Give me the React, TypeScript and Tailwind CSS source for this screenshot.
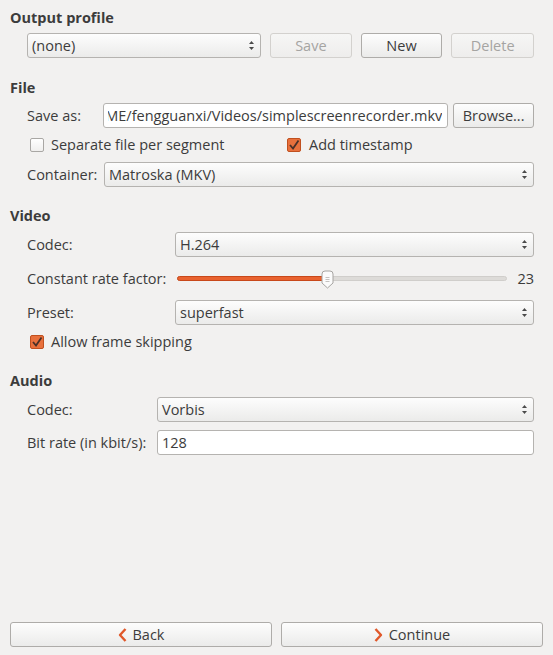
import React, { useEffect, useRef } from "react";

const font = { fontFamily: '"Open Sans", "Noto Sans", sans-serif' };

function Arrows() {
  return (
    <svg width="7" height="11" viewBox="0 0 7 11" className="shrink-0">
      <path d="M3.5 1 L6 4 L1 4 Z" fill="#4a4a4a" />
      <path d="M3.5 10 L6 7 L1 7 Z" fill="#4a4a4a" />
    </svg>
  );
}

function Combo({ text, className = "" }: { text: string; className?: string }) {
  return (
    <div
      className={
        "h-[25px] flex items-center justify-between rounded-[3px] border border-[#b5b3b0] bg-gradient-to-b from-[#fdfdfd] to-[#ebebea] pl-[4px] pr-[5px] text-[14.5px] text-[#3c3c3c] whitespace-nowrap " +
        className
      }
    >
      <span>{text}</span>
      <Arrows />
    </div>
  );
}

function Btn({
  children,
  disabled = false,
  className = "",
}: {
  children: React.ReactNode;
  disabled?: boolean;
  className?: string;
}) {
  return (
    <div
      className={
        "h-[25px] flex items-center justify-center rounded-[3px] border bg-gradient-to-b text-[14.5px] whitespace-nowrap " +
        (disabled
          ? "border-[#d3d1ce] from-[#f6f6f5] to-[#eeedec] text-[#a5a4a2] "
          : "border-[#aeaca9] from-[#fdfdfd] to-[#ebebea] text-[#3c3c3c] ") +
        className
      }
    >
      {children}
    </div>
  );
}

function Input({ text, className = "" }: { text: string; className?: string }) {
  return (
    <div
      className={
        "h-[25px] flex items-center rounded-[3px] border border-[#b5b3b0] bg-white px-[4px] text-[14.5px] text-[#3c3c3c] overflow-hidden whitespace-nowrap " +
        className
      }
    >
      {text}
    </div>
  );
}

function PathInput() {
  const ref = useRef<HTMLInputElement>(null);
  useEffect(() => {
    const el = ref.current;
    if (el) el.scrollLeft = el.scrollWidth;
  }, []);
  return (
    <input
      ref={ref}
      readOnly
      value="$HOME/fengguanxi/Videos/simplescreenrecorder.mkv"
      className="w-[346px] h-[25px] rounded-[3px] border border-[#b5b3b0] bg-white pl-[4px] pr-[5px] text-[14.5px] text-[#3c3c3c] outline-none"
      style={font}
    />
  );
}

function Check({ checked }: { checked: boolean }) {
  if (!checked)
    return (
      <div className="w-[14px] h-[14px] rounded-[2px] border border-[#a9a7a4] bg-gradient-to-b from-white to-[#f0efee] shrink-0" />
    );
  return (
    <div className="w-[14px] h-[14px] rounded-[2px] border border-[#c0501f] bg-[#e8703c] shrink-0 flex items-center justify-center">
      <svg width="12" height="12" viewBox="0 0 12 12">
        <path d="M2 6 L5 9.5 L10.5 1.5" stroke="#4a3028" strokeWidth="1.8" fill="none" />
      </svg>
    </div>
  );
}

function Heading({ children, className = "" }: { children: React.ReactNode; className?: string }) {
  return (
    <div className={"pl-[10px] h-[18px] flex items-center text-[14.5px] font-bold text-[#3c3c3c] " + className}>
      {children}
    </div>
  );
}

function Label({ children, className = "" }: { children: React.ReactNode; className?: string }) {
  return <div className={"text-[14.5px] text-[#3c3c3c] shrink-0 whitespace-nowrap " + className}>{children}</div>;
}

function Chevron({ dir }: { dir: "left" | "right" }) {
  return (
    <svg width="9" height="14" viewBox="0 0 9 14">
      {dir === "left" ? (
        <path d="M7.5 1 L2 7 L7.5 13" stroke="#e0582a" strokeWidth="2.4" fill="none" strokeLinejoin="round" />
      ) : (
        <path d="M1.5 1 L7 7 L1.5 13" stroke="#e0582a" strokeWidth="2.4" fill="none" strokeLinejoin="round" />
      )}
    </svg>
  );
}

export default function App() {
  return (
    <div
      style={font}
      className="w-[553px] h-[655px] bg-[#f2f1f0] flex flex-col text-[#3c3c3c] overflow-hidden"
    >
      <Heading className="mt-[9px]">Output profile</Heading>
      <div className="mt-[6px] flex items-center pl-[27px] pr-[19px] h-[25px]">
        <Combo text="(none)" className="w-[235px]" />
        <Btn disabled className="w-[82px] ml-[9px]">Save</Btn>
        <Btn className="w-[82px] ml-[9px]">New</Btn>
        <Btn disabled className="w-[83px] ml-[9px]">Delete</Btn>
      </div>

      <Heading className="mt-[21px]">File</Heading>
      <div className="mt-[6px] flex items-center pl-[27px] pr-[19px] h-[25px]">
        <Label className="w-[76px]">Save as:</Label>
        <PathInput />
        <Btn className="w-[81px] ml-[5px]">Browse...</Btn>
      </div>
      <div className="mt-[5px] flex items-center h-[24px] pl-[30px]">
        <Check checked={false} />
        <Label className="ml-[7px] w-[236px]">Separate file per segment</Label>
        <Check checked={true} />
        <Label className="ml-[8px]">Add timestamp</Label>
      </div>
      <div className="mt-[5px] flex items-center pl-[27px] pr-[19px] h-[25px]">
        <Label className="w-[77px]">Container:</Label>
        <Combo text="Matroska (MKV)" className="flex-1" />
      </div>

      <Heading className="mt-[20px]">Video</Heading>
      <div className="mt-[7px] flex items-center pl-[27px] pr-[19px] h-[25px]">
        <Label className="w-[148px]">Codec:</Label>
        <Combo text="H.264" className="flex-1" />
      </div>
      <div className="mt-[8px] flex items-center pl-[27px] pr-[19px] h-[27px]">
        <Label className="w-[150px]">Constant rate factor:</Label>
        <div className="relative w-[332px] h-[20px] flex items-center">
          <div className="w-full h-[5px] rounded-full bg-[#dddbd8] border border-[#d0cecb]" />
          <div className="absolute left-0 top-[7px] w-[150px] h-[5px] rounded-full bg-[#e9622f] border border-[#c8481a]" />
          <svg
            className="absolute left-[144px] top-[1px]"
            width="13"
            height="19"
            viewBox="0 0 13 19"
          >
            <path
              d="M1 4 Q1 1 4 1 L9 1 Q12 1 12 4 L12 13 L6.5 18 L1 13 Z"
              fill="#fbfbfb"
              stroke="#a6a4a1"
              strokeWidth="1"
            />
            <path d="M4.5 7.5 H8.5 M4.5 9.5 H8.5 M4.5 11.5 H8.5" stroke="#b5b3b0" strokeWidth="0.8" />
          </svg>
        </div>
        <Label className="ml-[10px]">23</Label>
      </div>
      <div className="mt-[8px] flex items-center pl-[27px] pr-[19px] h-[25px]">
        <Label className="w-[148px]">Preset:</Label>
        <Combo text="superfast" className="flex-1" />
      </div>
      <div className="mt-[5px] flex items-center h-[24px] pl-[30px]">
        <Check checked={true} />
        <Label className="ml-[7px]">Allow frame skipping</Label>
      </div>

      <Heading className="mt-[18px]">Audio</Heading>
      <div className="mt-[7px] flex items-center pl-[27px] pr-[19px] h-[25px]">
        <Label className="w-[130px]">Codec:</Label>
        <Combo text="Vorbis" className="flex-1" />
      </div>
      <div className="mt-[8px] flex items-center pl-[27px] pr-[19px] h-[25px]">
        <Label className="w-[130px]">Bit rate (in kbit/s):</Label>
        <Input text="128" className="flex-1" />
      </div>

      <div className="mt-auto mb-[8px] flex px-[10px] gap-[9px]">
        <Btn className="flex-1 gap-[6px]">
          <Chevron dir="left" />
          <span>Back</span>
        </Btn>
        <Btn className="flex-1 gap-[6px]">
          <Chevron dir="right" />
          <span>Continue</span>
        </Btn>
      </div>
    </div>
  );
}
